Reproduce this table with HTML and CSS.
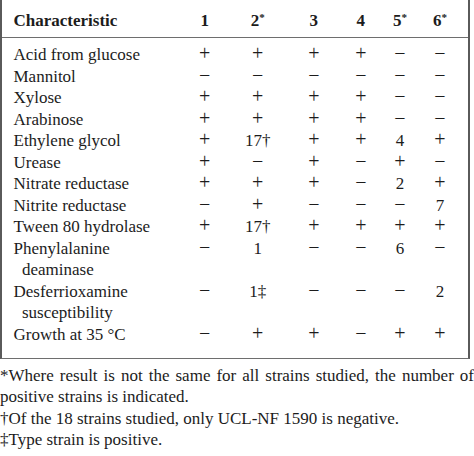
FILE: index.html
```html
<!DOCTYPE html>
<html lang="en">
<head>
<meta charset="utf-8">
<title>Characteristics table</title>
<link rel="stylesheet" href="styles.css">
</head>
<body>
<div class="frame">
<table class="tbl">
<colgroup>
<col class="c0"><col class="c1"><col class="c2"><col class="c3"><col class="c4"><col class="c5"><col class="c6">
</colgroup>
<thead>
<tr><th class="name">Characteristic</th><th>1</th><th>2<sup class="st">*</sup></th><th>3</th><th>4</th><th>5<sup class="st">*</sup></th><th class="last">6<sup class="st">*</sup></th></tr>
</thead>
<tbody>
<tr class="first"><td class="name">Acid from glucose</td><td><span class="sg">+</span></td><td><span class="sg">+</span></td><td><span class="sg">+</span></td><td><span class="sg">+</span></td><td><span class="sg">−</span></td><td class="last"><span class="sg">−</span></td></tr>
<tr><td class="name">Mannitol</td><td><span class="sg">−</span></td><td><span class="sg">−</span></td><td><span class="sg">−</span></td><td><span class="sg">−</span></td><td><span class="sg">−</span></td><td class="last"><span class="sg">−</span></td></tr>
<tr><td class="name">Xylose</td><td><span class="sg">+</span></td><td><span class="sg">+</span></td><td><span class="sg">+</span></td><td><span class="sg">+</span></td><td><span class="sg">−</span></td><td class="last"><span class="sg">−</span></td></tr>
<tr><td class="name">Arabinose</td><td><span class="sg">+</span></td><td><span class="sg">+</span></td><td><span class="sg">+</span></td><td><span class="sg">+</span></td><td><span class="sg">−</span></td><td class="last"><span class="sg">−</span></td></tr>
<tr><td class="name">Ethylene glycol</td><td><span class="sg">+</span></td><td>17†</td><td><span class="sg">+</span></td><td><span class="sg">+</span></td><td>4</td><td class="last"><span class="sg">+</span></td></tr>
<tr><td class="name">Urease</td><td><span class="sg">+</span></td><td><span class="sg">−</span></td><td><span class="sg">+</span></td><td><span class="sg">−</span></td><td><span class="sg">+</span></td><td class="last"><span class="sg">−</span></td></tr>
<tr><td class="name">Nitrate reductase</td><td><span class="sg">+</span></td><td><span class="sg">+</span></td><td><span class="sg">+</span></td><td><span class="sg">−</span></td><td>2</td><td class="last"><span class="sg">+</span></td></tr>
<tr><td class="name">Nitrite reductase</td><td><span class="sg">−</span></td><td><span class="sg">+</span></td><td><span class="sg">−</span></td><td><span class="sg">−</span></td><td><span class="sg">−</span></td><td class="last">7</td></tr>
<tr><td class="name">Tween 80 hydrolase</td><td><span class="sg">+</span></td><td>17†</td><td><span class="sg">+</span></td><td><span class="sg">+</span></td><td><span class="sg">+</span></td><td class="last"><span class="sg">+</span></td></tr>
<tr><td class="name">Phenylalanine deaminase</td><td><span class="sg">−</span></td><td>1</td><td><span class="sg">−</span></td><td><span class="sg">−</span></td><td>6</td><td class="last"><span class="sg">−</span></td></tr>
<tr><td class="name">Desferrioxamine susceptibility</td><td><span class="sg">−</span></td><td>1‡</td><td><span class="sg">−</span></td><td><span class="sg">−</span></td><td><span class="sg">−</span></td><td class="last">2</td></tr>
<tr class="end"><td class="name">Growth at 35 °C</td><td><span class="sg">−</span></td><td><span class="sg">+</span></td><td><span class="sg">+</span></td><td><span class="sg">−</span></td><td><span class="sg">+</span></td><td class="last"><span class="sg">+</span></td></tr>
</tbody>
</table>
</div>
<div class="notes">
<p class="note just">*Where result is not the same for all strains studied, the number of positive strains is indicated.</p>
<p class="note">†Of the 18 strains studied, only UCL-NF 1590 is negative.</p>
<p class="note">‡Type strain is positive.</p>
</div>
</body>
</html>
```
FILE: styles.css
```css
html, body {
  margin: 0;
  padding: 0;
  background: #ffffff;
}
body {
  font-family: "Liberation Serif", "Times New Roman", serif;
  font-size: 17px;
  line-height: 21.5px;
  color: #1c1c1c;
  width: 474px;
}
.frame {
  width: 470px;
  box-sizing: border-box;
  border-left: 2.5px solid #5a5a5a;
  border-right: 2px solid #5a5a5a;
  border-bottom: 1.5px solid #6e6e6e;
}
.tbl {
  width: 100%;
  border-collapse: collapse;
  table-layout: fixed;
}
.c0 { width: 177.5px; }
.c1 { width: 50px; }
.c2 { width: 56px; }
.c3 { width: 56px; }
.c4 { width: 38px; }
.c5 { width: 40px; }
.c6 { width: 48px; }
.tbl th, .tbl td {
  padding: 0;
  text-align: center;
  vertical-align: top;
  font-weight: normal;
}
.tbl th {
  font-weight: bold;
  padding-top: 9.5px;
  padding-bottom: 6px;
  border-bottom: 1.5px solid #6e6e6e;
}
.tbl .name {
  text-align: left;
  padding-left: 20px;
  text-indent: -8.5px;
}
.tbl .last {
  padding-right: 8px;
}
.tbl tr.first td {
  padding-top: 6px;
}
.tbl tr.end td {
  padding-bottom: 13px;
}
.st {
  font-size: 11px;
  line-height: 0;
  vertical-align: 5px;
  font-weight: bold;
}
.sg {
  font-size: 20px;
  line-height: 0;
}
.notes {
  padding-top: 5.5px;
}
.note {
  margin: 0;
  line-height: 21.6px;
}
.just {
  text-align: justify;
}
```
